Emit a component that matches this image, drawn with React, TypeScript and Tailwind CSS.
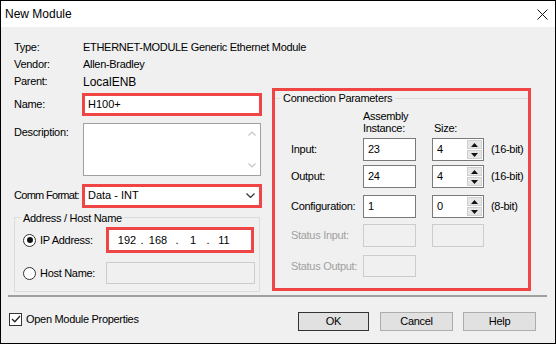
import React from 'react';

function Radio({ checked }: { checked?: boolean }) {
  return (
    <span className="w-[13px] h-[13px] rounded-full border border-[#333] bg-white flex items-center justify-center shrink-0">
      {checked && <span className="w-[6px] h-[6px] rounded-full bg-[#111]" />}
    </span>
  );
}

function Arrow({ up }: { up?: boolean }) {
  return (
    <svg width="7" height="4" viewBox="0 0 7 4">
      {up ? <polygon points="0,4 7,4 3.5,0" fill="#111" /> : <polygon points="0,0 7,0 3.5,4" fill="#111" />}
    </svg>
  );
}

function Spinner({ value }: { value: string }) {
  return (
    <div className="w-[52px] h-[23px] border border-[#7a7a7a] bg-white flex">
      <span className="flex-1 pl-[4px] flex items-center">{value}</span>
      <div className="w-[17px] flex flex-col gap-px p-px">
        <div className="flex-1 bg-[#e6e6e6] border border-[#d0d0d0] flex items-center justify-center"><Arrow up /></div>
        <div className="flex-1 bg-[#e6e6e6] border border-[#d0d0d0] flex items-center justify-center"><Arrow /></div>
      </div>
    </div>
  );
}

function Box({ value, disabled, h }: { value?: string; disabled?: boolean; h: string }) {
  return (
    <div className={`w-[53px] ${h} border flex items-center pl-[4px] ${disabled ? 'border-[#cccccc] bg-[#f0f0f0]' : 'border-[#7a7a7a] bg-white'}`}>
      {value}
    </div>
  );
}

export default function App() {
  const info: [string, string][] = [
    ['Type:', 'ETHERNET-MODULE Generic Ethernet Module'],
    ['Vendor:', 'Allen-Bradley'],
    ['Parent:', 'LocalENB'],
  ];

  return (
    <div className="w-[556px] h-[344px] border border-black bg-[#f0f0f0] flex flex-col overflow-hidden font-['Liberation_Sans',Arial,sans-serif] text-[11px] tracking-[-0.3px] text-black">
      {/* title bar */}
      <div className="h-[26px] bg-white flex items-center justify-between pl-[4px] pr-[7px] shrink-0">
        <span className="text-[12px] tracking-normal">New Module</span>
        <svg width="11" height="11" viewBox="0 0 11 11">
          <path d="M0.5 0.5 L10.5 10.5 M10.5 0.5 L0.5 10.5" stroke="#111" strokeWidth="1" />
        </svg>
      </div>

      <div className="flex h-[265px] shrink-0">
        {/* left column */}
        <div className="w-[271px] shrink-0 pl-[13px] pt-[12px] flex flex-col">
          {info.map(([k, v]) => (
            <div key={k} className="flex h-[18px] items-center whitespace-nowrap">
              <span className="w-[69px] shrink-0">{k}</span>
              <span className={k === 'Parent:' ? 'text-[12px] tracking-normal' : ''}>{v}</span>
            </div>
          ))}

          <div className="mt-[2px] flex items-center">
            <span className="w-[68px]">Name:</span>
            <div className="w-[180px] h-[23px] border-[3px] border-[#f04545] bg-white flex items-center pl-[3px] tracking-normal">H100+</div>
          </div>

          <div className="mt-[7px] flex">
            <span className="w-[69px] pt-[1px]">Description:</span>
            <div className="w-[178px] h-[53px] border border-[#a0a0a0] bg-white flex justify-end">
              <div className="w-[17px] flex flex-col items-center justify-between py-[7px]">
                <svg width="8" height="5" viewBox="0 0 8 5"><path d="M0.5 4.5 L4 1 L7.5 4.5" stroke="#c4c4c4" fill="none" strokeWidth="1.2" /></svg>
                <svg width="8" height="5" viewBox="0 0 8 5"><path d="M0.5 0.5 L4 4 L7.5 0.5" stroke="#c4c4c4" fill="none" strokeWidth="1.2" /></svg>
              </div>
            </div>
          </div>

          <div className="mt-[8px] flex items-center">
            <span className="w-[68px] whitespace-nowrap tracking-[-0.7px]">Comm Format:</span>
            <div className="w-[180px] h-[24px] border-[3px] border-[#f04545] bg-white flex items-center justify-between pl-[3px] pr-[4px] tracking-normal">
              <span>Data - INT</span>
              <svg width="9" height="5" viewBox="0 0 9 5"><path d="M0.5 0.5 L4.5 4.5 L8.5 0.5" stroke="#333" fill="none" strokeWidth="1.2" /></svg>
            </div>
          </div>

          <fieldset className="mt-[2px] w-[246px] border border-[#dcdcdc] pl-[8px] pb-[7px]">
            <legend className="-ml-[2px] px-[2px]">Address / Host Name</legend>
            <div className="pt-[1px] flex items-center">
              <div className="w-[83px] flex items-center gap-[4px]">
                <Radio checked />
                <span>IP Address:</span>
              </div>
              <div className="w-[148px] h-[26px] border-[3px] border-[#f04545] bg-white flex items-center pl-[6px] tracking-normal">
                <span className="w-[24px] text-center">192</span>
                <span className="w-[6px] text-center">.</span>
                <span className="w-[26px] text-center">168</span>
                <span className="w-[12px] text-center">.</span>
                <span className="w-[20px] text-center">1</span>
                <span className="w-[10px] text-center">.</span>
                <span className="w-[22px] text-center">11</span>
              </div>
            </div>
            <div className="mt-[9px] flex items-center">
              <div className="w-[83px] flex items-center gap-[4px]">
                <Radio />
                <span>Host Name:</span>
              </div>
              <div className="w-[149px] h-[22px] border border-[#cccccc] bg-[#f0f0f0]" />
            </div>
          </fieldset>
        </div>

        {/* connection parameters */}
        <div className="mt-[61px] w-[259px] h-[203px] border-[3px] border-[#f04545] flex flex-col">
          <div className="h-[14px] flex items-center">
            <div className="w-[5px] h-px bg-[#dcdcdc]" />
            <span className="px-[3px]">Connection Parameters</span>
            <div className="flex-1 h-px bg-[#dcdcdc]" />
          </div>
          <div className="pl-[16px] flex flex-col">
            <div className="mt-[5px] flex">
              <div className="w-[72px]" />
              <div className="w-[53px] leading-[12px]">Assembly<br />Instance:</div>
              <div className="ml-[16px] self-end leading-[12px] pl-[2px]">Size:</div>
            </div>

            <div className="mt-[4px] flex items-center">
              <span className="w-[72px]">Input:</span>
              <Box value="23" h="h-[23px]" />
              <div className="ml-[16px]"><Spinner value="4" /></div>
              <span className="ml-[7px]">(16-bit)</span>
            </div>
            <div className="mt-[4px] flex items-center">
              <span className="w-[72px]">Output:</span>
              <Box value="24" h="h-[23px]" />
              <div className="ml-[16px]"><Spinner value="4" /></div>
              <span className="ml-[7px]">(16-bit)</span>
            </div>
            <div className="mt-[7px] flex items-center">
              <span className="w-[72px]">Configuration:</span>
              <Box value="1" h="h-[23px]" />
              <div className="ml-[16px]"><Spinner value="0" /></div>
              <span className="ml-[7px]">(8-bit)</span>
            </div>
            <div className="mt-[6px] flex items-center text-[#a0a0a0]">
              <span className="w-[72px]">Status Input:</span>
              <Box disabled h="h-[23px]" />
              <div className="ml-[16px] w-[52px] h-[23px] border border-[#cccccc] bg-[#f0f0f0]" />
            </div>
            <div className="mt-[8px] flex items-center text-[#a0a0a0]">
              <span className="w-[72px] whitespace-nowrap">Status Output:</span>
              <Box disabled h="h-[22px]" />
            </div>
          </div>
        </div>
      </div>

      <div className="mt-[3px] ml-[7px] mr-[8px] h-[2px] bg-[#a0a0a0] shrink-0" />

      <div className="pt-[15px] pl-[8px] pr-[19px] flex items-start justify-between">
        <div className="flex items-center gap-[4px] h-[14px]">
          <span className="w-[13px] h-[13px] border border-[#333] bg-white flex items-center justify-center">
            <svg width="10" height="8" viewBox="0 0 10 8"><path d="M1 4 L3.8 6.8 L9 1" stroke="#222" fill="none" strokeWidth="1.3" /></svg>
          </span>
          <span>Open Module Properties</span>
        </div>
        <div className="flex">
          <button className="w-[71px] h-[19px] border border-[#333] bg-[#e1e1e1] flex items-center justify-center">OK</button>
          <button className="ml-[11px] w-[73px] h-[19px] border border-[#adadad] bg-[#e1e1e1] flex items-center justify-center">Cancel</button>
          <button className="ml-[10px] w-[73px] h-[19px] border border-[#adadad] bg-[#e1e1e1] flex items-center justify-center">Help</button>
        </div>
      </div>
    </div>
  );
}
